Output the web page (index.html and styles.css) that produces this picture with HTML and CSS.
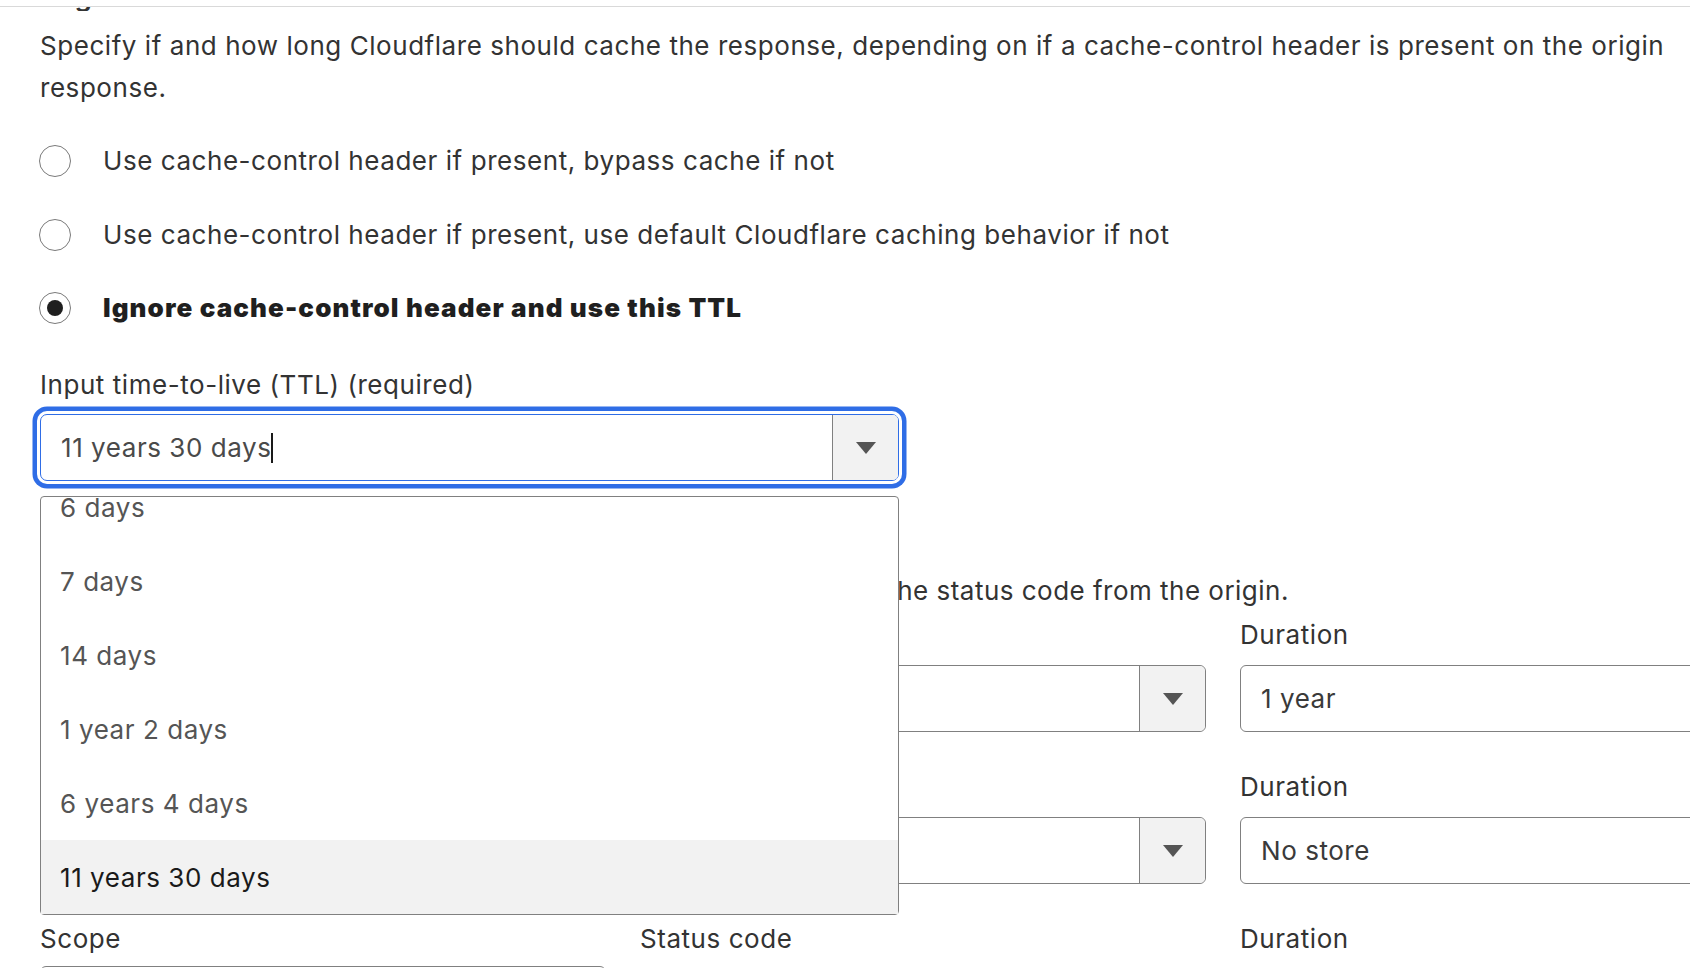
FILE: index.html
```html
<!DOCTYPE html>
<html lang="en">
<head>
<meta charset="utf-8">
<title>Edge TTL</title>
<link rel="stylesheet" href="styles.css">
</head>
<body>
<div class="topbar"></div>
<div class="clip"><h2 class="clipped-heading">Edge TTL</h2></div>
<main class="content">
  <p class="desc">Specify if and how long Cloudflare should cache the response, depending on if a cache-control header is present on the origin response.</p>

  <div class="radios">
    <label class="radio-row"><span class="radio"></span><span class="radio-text">Use cache-control header if present, bypass cache if not</span></label>
    <label class="radio-row"><span class="radio"></span><span class="radio-text">Use cache-control header if present, use default Cloudflare caching behavior if not</span></label>
    <label class="radio-row selected"><span class="radio"><span class="dot"></span></span><span class="radio-text bold">Ignore cache-control header and use this TTL</span></label>
  </div>

  <div class="field-label">Input time-to-live (TTL) (required)</div>
  <div class="combo-wrap">
    <div class="combo focused">
      <div class="combo-value"><span class="typed">11 years 30 days</span><span class="caret"></span></div>
      <div class="combo-btn"><svg width="20" height="12" viewBox="0 0 20 12"><polygon points="0,0 20,0 10,12" fill="#555"/></svg></div>
    </div>
    <div class="menu">
      <div class="menu-inner">
        <div class="opt">6 days</div>
        <div class="opt">7 days</div>
        <div class="opt">14 days</div>
        <div class="opt">1 year 2 days</div>
        <div class="opt">6 years 4 days</div>
        <div class="opt active">11 years 30 days</div>
      </div>
    </div>
  </div>

  <h3 class="sub-heading">Status code TTL</h3>
  <p class="desc2">Specify if and how long Cloudflare will cache responses based on the status code from the origin.</p>

  <div class="grid">
    <div class="cell"><div class="grid-label">Scope</div><div class="combo"><div class="combo-value">Single</div><div class="combo-btn"><svg width="20" height="12" viewBox="0 0 20 12"><polygon points="0,0 20,0 10,12" fill="#555"/></svg></div></div></div>
    <div class="cell"><div class="grid-label">Status code</div><div class="combo"><div class="combo-value">200</div><div class="combo-btn"><svg width="20" height="12" viewBox="0 0 20 12"><polygon points="0,0 20,0 10,12" fill="#555"/></svg></div></div></div>
    <div class="cell"><div class="grid-label">Duration</div><div class="text-input">1 year</div></div>

    <div class="cell"><div class="grid-label">Scope</div><div class="combo"><div class="combo-value">Single</div><div class="combo-btn"><svg width="20" height="12" viewBox="0 0 20 12"><polygon points="0,0 20,0 10,12" fill="#555"/></svg></div></div></div>
    <div class="cell"><div class="grid-label">Status code</div><div class="combo"><div class="combo-value">404</div><div class="combo-btn"><svg width="20" height="12" viewBox="0 0 20 12"><polygon points="0,0 20,0 10,12" fill="#555"/></svg></div></div></div>
    <div class="cell"><div class="grid-label">Duration</div><div class="text-input">No store</div></div>

    <div class="cell tight"><div class="grid-label">Scope</div><div class="text-input"></div></div>
    <div class="cell"><div class="grid-label">Status code</div><div class="combo"><div class="combo-value"></div><div class="combo-btn"><svg width="20" height="12" viewBox="0 0 20 12"><polygon points="0,0 20,0 10,12" fill="#555"/></svg></div></div></div>
    <div class="cell"><div class="grid-label">Duration</div><div class="text-input"></div></div>
  </div>
</main>
</body>
</html>
```

FILE: styles.css
```css
html, body {
  margin: 0;
  padding: 0;
  background: #fff;
}
body {
  font-family: Inter, "Noto Sans", "Liberation Sans", sans-serif;
  color: #333;
  font-size: 26px;
  letter-spacing: 0.55px;
  overflow: hidden;
  width: 1690px;
  height: 968px;
}
.topbar {
  height: 6px;
  border-bottom: 1px solid #d9d9d9;
}
.clip {
  height: 4px;
  overflow: hidden;
  padding-left: 40px;
}
.clipped-heading {
  margin: -28px 0 0 0;
  font-size: 28px;
  line-height: 34px;
  font-weight: 600;
  color: #333;
  letter-spacing: 0;
}
.content {
  padding-left: 40px;
  width: 1766px;
}
.desc {
  margin: 14px 0 0 0;
  line-height: 42px;
  max-width: 1645px;
}
.radios {
  display: flex;
  flex-direction: column;
  gap: 29.5px;
  margin-top: 30px;
}
.radio-row {
  display: flex;
  align-items: center;
  height: 44px;
  gap: 32px;
}
.radio {
  width: 32px;
  height: 32px;
  box-sizing: border-box;
  border: 1.5px solid #7a7a7a;
  border-radius: 50%;
  display: flex;
  align-items: center;
  justify-content: center;
  flex: none;
  margin-left: -1px;
}
.dot {
  width: 16px;
  height: 16px;
  border-radius: 50%;
  background: #1f1f1f;
}
.radio-text {
  line-height: 44px;
}
.radio-text.bold {
  font-weight: 900;
  color: #1f1f1f;
  letter-spacing: 1.1px;
}
.field-label {
  margin-top: 34px;
  line-height: 42px;
}
.combo-wrap {
  position: relative;
  width: 859px;
  margin-top: 8px;
}
.combo {
  display: flex;
  height: 67px;
  box-sizing: border-box;
  border: 1.5px solid #808080;
  border-radius: 6px;
  background: #fff;
  overflow: hidden;
}
.combo.focused {
  border-color: #2f6de6;
  box-shadow: 0 0 0 3px #fff, 0 0 0 7.5px #2f6de6;
  border-radius: 7px;
  overflow: visible;
}
.combo-value {
  flex: 1;
  display: flex;
  align-items: center;
  padding-left: 20px;
  color: #4a4a4a;
}
.caret {
  display: inline-block;
  width: 2px;
  height: 30px;
  background: #1a1a1a;
  margin-left: 0;
}
.combo-btn {
  width: 65px;
  flex: none;
  border-left: 1.5px solid #808080;
  background: #f2f2f2;
  display: flex;
  align-items: center;
  justify-content: center;
  border-radius: 0 5px 5px 0;
}
.menu {
  position: absolute;
  left: 0;
  top: 82px;
  width: 859px;
  box-sizing: border-box;
  border: 1.5px solid #808080;
  border-radius: 4px;
  background: #fff;
  z-index: 10;
}
.menu-inner {
  height: 417px;
  overflow: hidden;
}
.opt {
  height: 74px;
  display: flex;
  align-items: center;
  padding-left: 19px;
  color: #555;
}
.opt:first-child {
  margin-top: -27px;
}
.opt.active {
  background: #f2f2f2;
  color: #1a1a1a;
}
.sub-heading {
  margin: 41px 0 0 0;
  font-size: 26px;
  line-height: 42px;
  font-weight: 700;
}
.desc2 {
  margin: 6px 0 0 0;
  line-height: 42px;
  white-space: nowrap;
  letter-spacing: 0.48px;
}
.grid {
  display: grid;
  grid-template-columns: 566px 566px 566px;
  column-gap: 34px;
  row-gap: 34px;
  margin-top: 2px;
}
.cell {
  display: flex;
  flex-direction: column;
  gap: 9px;
}
.cell.tight {
  gap: 6px;
}
.grid-label {
  line-height: 42px;
  color: #333;
}
.text-input {
  height: 67px;
  box-sizing: border-box;
  border: 1.5px solid #808080;
  border-radius: 6px;
  display: flex;
  align-items: center;
  padding-left: 20px;
  color: #3a3a3a;
}
```
